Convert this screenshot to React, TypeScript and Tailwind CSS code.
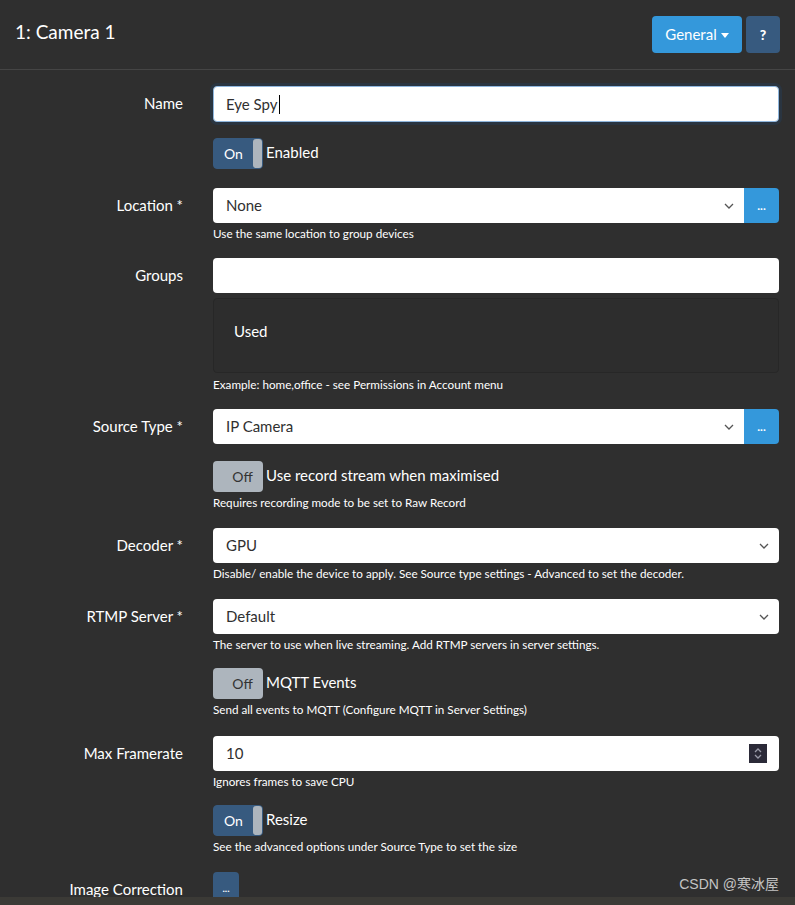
import { ReactNode } from "react";

const Chevron = () => (
 <svg width="10" height="6" viewBox="0 0 10 6" className="shrink-0">
  <path d="M1 1l4 4 4-4" fill="none" stroke="#555" strokeWidth="1.3" />
 </svg>
);

const Help = ({ children, className = "mt-[3px]" }: { children: ReactNode; className?: string }) => (
 <p className={`${className} text-[11.7px] leading-[14px] text-white`}>{children}</p>
);

const Row = ({ label, className = "", children }: { label?: string; className?: string; children: ReactNode }) => (
 <div className={`flex items-start ${className}`}>
  <div className="w-[183px] shrink-0 h-[35px] leading-[35px] text-right text-[15px] text-white">{label}</div>
  <div className="ml-[30px] mr-[16px] flex-1 min-w-0">{children}</div>
 </div>
);

const Select = ({ value, addon }: { value: string; addon?: boolean }) => (
 <div className="flex h-[35px]">
  <div
   className={`flex flex-1 items-center justify-between bg-white pl-[13px] pr-[10px] text-[15px] text-[#303030] ${
    addon ? "rounded-l-[4px]" : "rounded-[4px]"
   }`}
  >
   <span>{value}</span>
   <Chevron />
  </div>
  {addon && (
   <button className="w-[35px] rounded-r-[4px] bg-[#3498db] text-[12px] font-bold leading-none text-white">...</button>
  )}
 </div>
);

const Toggle = ({ on, label }: { on: boolean; label: string }) => (
 <div className="flex items-start">
  {on ? (
   <div className="flex h-[31px] w-[50px] rounded-[4px] border border-[#375a7f] bg-[#375a7f]">
    <span className="flex flex-1 items-center justify-center text-[14px] text-white">On</span>
    <span className="w-[9px] rounded-[3px] bg-[#adb5bd]" />
   </div>
  ) : (
   <div className="flex h-[31px] w-[50px] rounded-[4px] bg-[#adb5bd]">
    <span className="w-[9px]" />
    <span className="flex flex-1 items-center justify-center text-[14px] text-[#333]">Off</span>
   </div>
  )}
  <span className="ml-[3px] text-[15px] leading-[28px] text-white">{label}</span>
 </div>
);

const App = (): JSX.Element => {
 return (
  <div className="flex h-[905px] flex-col font-['Lato','Liberation_Sans',sans-serif]">
   <main className="relative h-[897px] shrink-0 overflow-hidden bg-[#2f2f2f]">
    <header className="flex h-[70px] items-start justify-between border-b border-[#454545] px-[15px] pt-[16px]">
     <h1 className="text-[19px] leading-[31px] text-white">1: Camera 1</h1>
     <div className="flex gap-[4px]">
      <button className="flex h-[37px] w-[90px] items-center justify-center rounded-[4px] bg-[#3498db] text-[15px] text-white">
       General
       <span className="ml-[4px] mt-[1px] h-0 w-0 border-x-[4px] border-t-[5px] border-x-transparent border-t-white" />
      </button>
      <button className="h-[37px] w-[34px] rounded-[4px] bg-[#375a7f] text-[14px] font-black text-white">?</button>
     </div>
    </header>

    <Row label="Name" className="mt-[16px]">
     <div className="flex h-[36px] items-center rounded-[4px] border border-[#8fb6dd] bg-white pl-[12px] text-[15px] text-[#303030] shadow-[0_0_0_3px_rgba(40,55,72,0.7)]">
      Eye Spy
      <span className="ml-[1px] h-[19px] w-[1px] bg-black" />
     </div>
    </Row>

    <Row className="mt-[16px] [&>div:first-child]:h-[31px]">
     <Toggle on label="Enabled" />
    </Row>

    <Row label="Location *" className="mt-[19px]">
     <Select value="None" addon />
     <Help>Use the same location to group devices</Help>
    </Row>

    <Row label="Groups" className="mt-[18px]">
     <div className="h-[35px] rounded-[4px] bg-white" />
     <div className="mt-[5px] h-[75px] rounded-[4px] border border-[#272727] bg-[#2d2d2d] pl-[20px] pt-[22px] text-[15px] leading-[20px] text-white">
      Used
     </div>
     <Help className="mt-[4px]">Example: home,office - see Permissions in Account menu</Help>
    </Row>

    <Row label="Source Type *" className="mt-[18px]">
     <Select value="IP Camera" addon />
    </Row>

    <Row className="mt-[17px] [&>div:first-child]:h-[31px]">
     <Toggle on={false} label="Use record stream when maximised" />
     <Help>Requires recording mode to be set to Raw Record</Help>
    </Row>

    <Row label="Decoder *" className="mt-[19px]">
     <Select value="GPU" />
     <Help>Disable/ enable the device to apply. See Source type settings - Advanced to set the decoder.</Help>
    </Row>

    <Row label="RTMP Server *" className="mt-[19px]">
     <Select value="Default" />
     <Help>The server to use when live streaming. Add RTMP servers in server settings.</Help>
    </Row>

    <Row className="mt-[17px] [&>div:first-child]:h-[31px]">
     <Toggle on={false} label="MQTT Events" />
     <Help>Send all events to MQTT (Configure MQTT in Server Settings)</Help>
    </Row>

    <Row label="Max Framerate" className="mt-[20px]">
     <div className="relative flex h-[35px] items-center rounded-[4px] bg-white pl-[13px] text-[15px] text-[#303030]">
      10
      <span className="absolute right-[12px] top-[8px] flex h-[19px] w-[18px] items-center justify-center bg-[#2b2a38]">
       <svg width="10" height="13" viewBox="0 0 10 13">
        <path d="M2 5l3-3 3 3M2 8l3 3 3-3" fill="none" stroke="#9a9aa8" strokeWidth="1.3" />
       </svg>
      </span>
     </div>
     <Help>Ignores frames to save CPU</Help>
    </Row>

    <Row className="mt-[17px] [&>div:first-child]:h-[31px]">
     <Toggle on label="Resize" />
     <Help>See the advanced options under Source Type to set the size</Help>
    </Row>

    <Row label="Image Correction" className="mt-[19px] [&>div:first-child]:leading-[34px]">
     <button className="h-[31px] w-[26px] rounded-[4px] bg-[#375a7f] text-[10px] font-bold leading-none text-white">...</button>
    </Row>

    <span className="absolute bottom-[2px] right-[16px] font-['Liberation_Sans','Noto_Sans_CJK_SC',sans-serif] text-[14px] text-[#c4c4c4]">
     CSDN @寒冰屋
    </span>
   </main>
   <div className="flex-1 bg-[#3b3a36]" />
  </div>
 );
};

export default App;
